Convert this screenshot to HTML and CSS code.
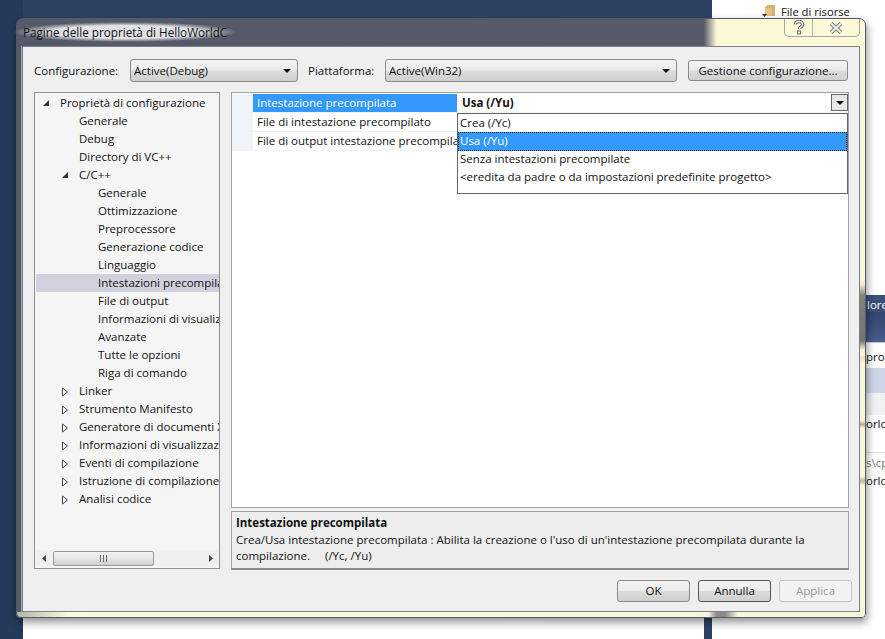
FILE: index.html
```html
<!DOCTYPE html>
<html lang="it">
<head>
<meta charset="utf-8">
<title>Pagine delle proprietà di HelloWorldC</title>
<link rel="stylesheet" href="styles.css">
</head>
<body>
<div class="desktop">
  <div class="ide-top"></div>
  <div class="ide-left"></div>
  <div class="ide-strip"></div>
  <div class="solution-file">
    <svg class="folder" width="15" height="15" viewBox="0 0 15 15"><path d="M5 2.500l1.500-1.500h7.500v11H4V3z" fill="#d9b272"/><path d="M4 4h6.500v8H4z" fill="#e6c48c"/><path d="M1 10h5l-2.500 3z" fill="#333"/></svg>
    <span>File di risorse</span>
  </div>
  <div class="side">
    <div class="side-head">lorer</div>
    <div class="side-band"></div>
    <div class="side-row side-first">progetto</div>
    <div class="side-sel"></div>
    <div class="side-grey"></div>
    <div class="side-row">orld</div>
    <div class="side-gap"></div>
    <div class="side-row side-path">s\cpp</div>
    <div class="side-row">orld</div>
  </div>

  <div class="window">
    <div class="titlebar">
      <span class="title">Pagine delle proprietà di HelloWorldC</span>
      <div class="caption">
        <div class="cap-btn cap-help">
          <svg width="12" height="15" viewBox="0 0 12 15"><path d="M2.500 4.500C2.500 2.500 4 1.500 6 1.500s3.500 1 3.500 3c0 1.500-1 2.200-2 2.800-.7.400-1 .8-1 1.700" fill="none" stroke="#6a6c72" stroke-width="3.400"/><path d="M2.500 4.500C2.500 2.500 4 1.500 6 1.500s3.500 1 3.500 3c0 1.500-1 2.200-2 2.800-.7.400-1 .8-1 1.700" fill="none" stroke="#f4f4f0" stroke-width="1.400"/><rect x="4.500" y="11" width="3" height="3" fill="#f4f4f0" stroke="#6a6c72"/></svg>
        </div>
        <div class="cap-btn cap-close">
          <svg width="14" height="12" viewBox="0 0 14 12"><path d="M2 1.500l10 9M12 1.500l-10 9" fill="none" stroke="#7a7c82" stroke-width="4"/><path d="M2 1.500l10 9M12 1.500l-10 9" fill="none" stroke="#f4f4f0" stroke-width="1.800"/></svg>
        </div>
      </div>
    </div>
    <div class="client">
      <div class="toolbar">
        <label class="tool-label lab-conf">Configurazione:</label>
        <div class="combo combo-conf"><span>Active(Debug)</span><i class="caret"></i></div>
        <label class="tool-label lab-plat">Piattaforma:</label>
        <div class="combo combo-plat"><span>Active(Win32)</span><i class="caret"></i></div>
        <div class="btn btn-manage">Gestione configurazione...</div>
      </div>
      <div class="main">
        <div class="tree">
          <ul class="tree-list">
            <li class="l0"><svg class="tw" width="8" height="8" viewBox="0 0 8 8"><path d="M7 1v6H1z" fill="#333"/></svg>Proprietà di configurazione</li>
            <li class="l1">Generale</li>
            <li class="l1">Debug</li>
            <li class="l1">Directory di VC++</li>
            <li class="l1"><svg class="tw" width="8" height="8" viewBox="0 0 8 8"><path d="M7 1v6H1z" fill="#333"/></svg>C/C++</li>
            <li class="l2">Generale</li>
            <li class="l2">Ottimizzazione</li>
            <li class="l2">Preprocessore</li>
            <li class="l2">Generazione codice</li>
            <li class="l2">Linguaggio</li>
            <li class="l2 sel">Intestazioni precompilate</li>
            <li class="l2">File di output</li>
            <li class="l2">Informazioni di visualizzazione</li>
            <li class="l2">Avanzate</li>
            <li class="l2">Tutte le opzioni</li>
            <li class="l2">Riga di comando</li>
            <li class="l1"><svg class="tw" width="8" height="10" viewBox="0 0 8 10"><path d="M1.500 1l5 4-5 4z" fill="#fff" stroke="#444"/></svg>Linker</li>
            <li class="l1"><svg class="tw" width="8" height="10" viewBox="0 0 8 10"><path d="M1.500 1l5 4-5 4z" fill="#fff" stroke="#444"/></svg>Strumento Manifesto</li>
            <li class="l1"><svg class="tw" width="8" height="10" viewBox="0 0 8 10"><path d="M1.500 1l5 4-5 4z" fill="#fff" stroke="#444"/></svg>Generatore di documenti XML</li>
            <li class="l1"><svg class="tw" width="8" height="10" viewBox="0 0 8 10"><path d="M1.500 1l5 4-5 4z" fill="#fff" stroke="#444"/></svg>Informazioni di visualizzazione</li>
            <li class="l1"><svg class="tw" width="8" height="10" viewBox="0 0 8 10"><path d="M1.500 1l5 4-5 4z" fill="#fff" stroke="#444"/></svg>Eventi di compilazione</li>
            <li class="l1"><svg class="tw" width="8" height="10" viewBox="0 0 8 10"><path d="M1.500 1l5 4-5 4z" fill="#fff" stroke="#444"/></svg>Istruzione di compilazione personalizzata</li>
            <li class="l1"><svg class="tw" width="8" height="10" viewBox="0 0 8 10"><path d="M1.500 1l5 4-5 4z" fill="#fff" stroke="#444"/></svg>Analisi codice</li>
          </ul>
          <div class="hscroll">
            <svg width="5" height="7" viewBox="0 0 5 7"><path d="M4 0v7L0 3.500z" fill="#444"/></svg>
            <div class="thumb"><svg width="7" height="7" viewBox="0 0 7 7"><path d="M.5 0v7M3.500 0v7M6.500 0v7" stroke="#666"/></svg></div>
            <svg width="5" height="7" viewBox="0 0 5 7"><path d="M1 0v7l4-3.500z" fill="#444"/></svg>
          </div>
        </div>
        <div class="right">
          <div class="grid">
            <div class="prop active">
              <div class="gutter"></div>
              <div class="prop-name">Intestazione precompilata</div>
              <div class="prop-value">Usa (/Yu)</div>
              <div class="drop-btn"><i class="caret"></i></div>
            </div>
            <div class="prop">
              <div class="gutter"></div>
              <div class="prop-name">File di intestazione precompilato</div>
              <div class="prop-value"></div>
            </div>
            <div class="prop">
              <div class="gutter"></div>
              <div class="prop-name">File di output intestazione precompilata</div>
              <div class="prop-value"></div>
            </div>
            <ul class="dropdown">
              <li>Crea (/Yc)</li>
              <li class="hot">Usa (/Yu)</li>
              <li>Senza intestazioni precompilate</li>
              <li>&lt;eredita da padre o da impostazioni predefinite progetto&gt;</li>
            </ul>
          </div>
          <div class="desc">
            <div class="desc-title">Intestazione precompilata</div>
            <div class="desc-text">Crea/Usa intestazione precompilata : Abilita la creazione o l'uso di un'intestazione precompilata durante la compilazione. &nbsp;&nbsp;&nbsp;&nbsp;(/Yc, /Yu)</div>
          </div>
        </div>
      </div>
      <div class="actions">
        <div class="btn btn-act">OK</div>
        <div class="btn btn-act btn-default">Annulla</div>
        <div class="btn btn-act btn-off">Applica</div>
      </div>
    </div>
  </div>
</div>
</body>
</html>
```
FILE: styles.css
```css
html, body { margin: 0; padding: 0; }
body { background: #fff; font-family: "Open Sans", "Noto Sans", sans-serif; font-size: 11.5px; color: #111; }
ul { list-style: none; margin: 0; padding: 0; }

.desktop { position: relative; width: 885px; height: 639px; overflow: hidden; background: #fff; }
.ide-top { position: absolute; left: 0; top: 0; width: 712px; height: 60px; background: #2d4263; }
.ide-left { position: absolute; left: 0; top: 0; width: 23px; height: 639px; background: #26395a; }
.ide-strip { position: absolute; left: 704px; top: 600px; width: 8px; height: 39px; background: #2d4263; }

.solution-file { position: absolute; left: 761px; top: 4px; display: flex; align-items: center; gap: 5px; font-size: 11.2px; line-height: 14px; }
.folder { flex: none; }

.side { position: absolute; left: 866px; top: 295px; width: 19px; overflow: hidden; white-space: nowrap; display: flex; flex-direction: column; }
.side-head { height: 17px; line-height: 19px; padding-left: 1px; background: #3c5078; color: #fff; }
.side-band { height: 31px; background: linear-gradient(#33466e, #3e5180 60%, #4a5c8a 95%, #fff); }
.side-row { height: 18px; line-height: 18px; flex: none; }
.side-first { margin-top: 5px; }
.side-sel { height: 25px; margin-top: 2px; background: #cdd5e6; }
.side-grey { height: 22px; background: #f1f1f1; }
.side-gap { height: 20px; border-bottom: 1px solid #ddd; box-sizing: border-box; }
.side-path { color: #777; margin-top: 1px; }

.window {
  position: absolute; left: 16px; top: 18px; width: 850px; height: 600px; box-sizing: border-box;
  border: 1px solid #555b66; border-radius: 7px 7px 4px 4px; padding: 0 5px 5px 5px; display: flex; flex-direction: column;
  background: linear-gradient(90deg, #555a68 0, #565b69 81%, #fbf8d8 82.500%, #fbf8d8 100%);
  box-shadow: 1px 4px 8px rgba(0,0,0,.45);
}
.window::before { content: ""; position: absolute; right: 0; top: 28px; bottom: 5px; width: 5px; background: linear-gradient(#f9f7da 0, #f9f7da 41%, #fbe9d0 42%, #80807c 44%, #74746f 52%, #f9ecd0 53.500%, #f9f7da 54.500%, #efe2c4 55%, #f9f7da 56%, #f9f7da 66%, #b8ac98 66.800%, #f9f7da 67.500%, #f9f7da 76%, #c0b4a0 76.800%, #f9f7da 77.500%); }
.window::after { content: ""; position: absolute; left: 0; right: 0; bottom: 0; height: 5px; background: linear-gradient(90deg, #b4b4a8, #fbfadf 6%, #f8f7e2 81.500%, #8a8a88 82.500%, #8a8a88 83.500%, #f8f7dc 85%); border-radius: 0 0 4px 4px; }

.titlebar { flex: none; height: 27px; display: flex; align-items: flex-start; justify-content: space-between; position: relative; }
.title { font-size: 11.7px; line-height: 16px; color: #111; background: radial-gradient(ellipse closest-side, rgba(232,233,236,.95) 65%, rgba(232,233,236,0)); padding: 2px 10px; margin: 3px 0 0 -9px; }
.caption { display: flex; height: 18px; box-sizing: border-box; border: 1px solid #a8a89a; border-top: 0; border-radius: 0 0 5px 5px; }
.cap-btn { display: flex; align-items: center; justify-content: center; }
.cap-help { width: 27px; border-right: 1px solid #b6b6a8; }
.cap-close { width: 46px; }

.client { flex: 1; min-height: 0; border: 1px solid #7c8088; background: #efefef; padding: 12px 10px 0 11px; display: flex; flex-direction: column; box-sizing: border-box; box-shadow: -1px 0 0 rgba(255,255,255,.45); position: relative; z-index: 1; }

.toolbar { flex: none; display: flex; align-items: center; height: 23px; }
.tool-label { line-height: 16px; }
.lab-conf { width: 96px; }
.lab-plat { width: 77px; margin-left: 10px; }
.combo { height: 23px; box-sizing: border-box; border: 1px solid #8a8a8a; border-radius: 3px; background: linear-gradient(#f3f3f3, #ececec 48%, #dcdcdc 52%, #cfcfcf); display: flex; align-items: center; justify-content: space-between; padding: 0 6px 0 3px; }
.combo-conf { width: 168px; }
.combo-plat { width: 292px; }
.caret { display: block; width: 0; height: 0; border-left: 4px solid transparent; border-right: 4px solid transparent; border-top: 4px solid #111; }
.btn { box-sizing: border-box; border: 1px solid #8a8a8a; border-radius: 3px; background: linear-gradient(#f3f3f3, #ececec 48%, #dcdcdc 52%, #cfcfcf); display: flex; align-items: center; justify-content: center; }
.btn-manage { width: 160px; height: 21px; margin-left: 11px; }

.main { flex: 1; min-height: 0; display: flex; gap: 11px; margin-top: 10px; }
.tree { width: 186px; flex: none; box-sizing: border-box; border: 1px solid #8a8e98; background: #f5f5f5; display: flex; flex-direction: column; overflow: hidden; margin-bottom: 1px; }
.tree-list { flex: 1; min-height: 0; padding-top: 1px; overflow: hidden; }
.tree-list li { position: relative; height: 18px; line-height: 18px; white-space: nowrap; overflow: hidden; }
.l0 { padding-left: 25px; }
.l1 { padding-left: 44px; }
.l2 { padding-left: 63px; }
.sel { background: #cfd1de; margin-left: 1px; padding-left: 62px; }
.tw { position: absolute; top: 5px; }
.l0 .tw { left: 7px; }
.l1 .tw { left: 26px; }

.hscroll { flex: none; height: 16px; margin: 0 1px 2px; background: #f0f0f0; display: flex; align-items: center; justify-content: space-between; padding: 0 5px 0 6px; }
.thumb { width: 101px; height: 15px; box-sizing: border-box; margin: 0 auto 0 6px; border: 1px solid #9a9a9a; border-radius: 2px; background: linear-gradient(#f2f2f2, #e6e6e6 50%, #cfcfcf); display: flex; align-items: center; justify-content: center; }

.right { flex: 1; min-width: 0; display: flex; flex-direction: column; gap: 3px; }
.grid { position: relative; flex: 1; min-height: 0; box-sizing: border-box; border: 1px solid #a0a0a0; background: #fff; padding-top: 1px; }
.prop { display: flex; height: 19px; position: relative; border-bottom: 1px solid #f3f3f3; box-sizing: border-box; }
.gutter { width: 21px; flex: none; background: #f0f4fa; }
.prop-name { width: 204px; flex: none; box-sizing: border-box; padding-left: 4px; line-height: 18px; white-space: nowrap; overflow: hidden; }
.prop-value { flex: 1; padding-left: 5px; line-height: 18px; font-weight: 700; }
.active .prop-name { background: #3399ff; color: #fff; }
.drop-btn { position: absolute; right: 0; top: 0; width: 17px; height: 17px; box-sizing: border-box; border: 1px solid #666; background: #e8e8e8; display: flex; align-items: center; justify-content: center; }

.dropdown { position: absolute; left: 225px; top: 20px; width: 391px; height: 81px; box-sizing: border-box; border: 1px solid #666; background: #fff; }
.dropdown li { height: 18px; line-height: 18px; padding-left: 2px; white-space: nowrap; }
.dropdown .hot { height: 19px; background: #3399ff; color: #fff; outline: 1px dotted #222; outline-offset: -1px; }
.dropdown .hot ~ li { line-height: 16px; }

.desc { flex: none; height: 59px; box-sizing: border-box; border: 1px solid #a0a0a0; border-bottom: 2px solid #8c8c8c; background: #eeeeee; padding: 3px 4px 0; line-height: 16px; }
.desc-title { font-weight: 700; margin-bottom: 1px; }

.actions { flex: none; display: flex; justify-content: flex-end; gap: 8px; height: 41px; align-items: center; margin-right: -3px; }
.btn-act { width: 73px; height: 22px; }
.btn-default { border-color: #555; }
.btn-off { border-color: #c4c4c4; color: #9a9a9a; background: #f2f2f2; }
```
